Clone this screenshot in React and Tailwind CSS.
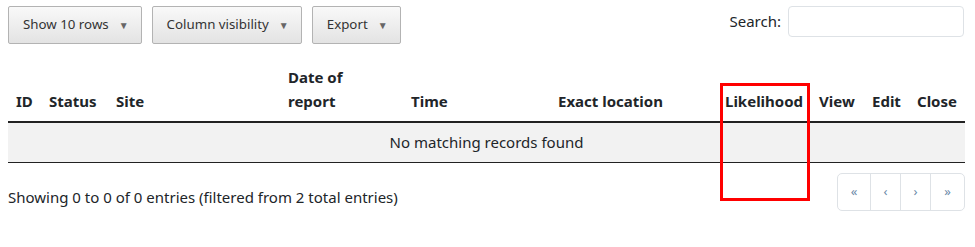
import React from "react";

const columns = [
  { label: "ID", w: "w-[33px]" },
  { label: "Status", w: "w-[67px]" },
  { label: "Site", w: "w-[172px]" },
  { label: "Date of report", w: "w-[123px]", wrap: true },
  { label: "Time", w: "w-[147px]" },
  { label: "Exact location", w: "w-[167px]" },
  { label: "Likelihood", w: "w-[94px]" },
  { label: "View", w: "w-[53px]" },
  { label: "Edit", w: "w-[45px]" },
  { label: "Close", w: "w-[56px]" },
];

const ToolButton = ({ children }) => (
  <button className="h-[38px] pl-[14px] pr-[12px] flex items-center gap-[10px] rounded-[2px] border border-[#b3b3b3] bg-gradient-to-b from-[#f9f9f9] to-[#e3e3e3] text-[#333] text-[13.3px]">
    <span>{children}</span>
    <span className="text-[10px] text-[#666]">▼</span>
  </button>
);

export default function App() {
  return (
    <div className="relative w-[975px] h-[247px] bg-white text-[#212529] text-[15px] font-['Noto_Sans',sans-serif] px-[8px] pt-[6px]">
      <div className="flex items-start justify-between">
        <div className="flex gap-[10px]">
          <ToolButton>Show 10 rows</ToolButton>
          <ToolButton>Column visibility</ToolButton>
          <ToolButton>Export</ToolButton>
        </div>
        <label className="flex items-center gap-[7px] pr-[3px]">
          <span>Search:</span>
          <input className="w-[176px] h-[31px] rounded-[4px] border border-[#dee2e6] outline-none" />
        </label>
      </div>

      <table className="table-fixed w-[957px] mt-[13px] border-collapse">
        <thead>
          <tr className="border-b-2 border-[#222]">
            {columns.map((c) => (
              <th
                key={c.label}
                className={`${c.w} text-left align-bottom font-bold leading-[24px] pl-[8px] pt-[8px] pb-[8px] ${c.wrap ? "" : "whitespace-nowrap"}`}
              >
                {c.wrap ? (
                  <>
                    Date of
                    <br />
                    report
                  </>
                ) : (
                  c.label
                )}
              </th>
            ))}
          </tr>
        </thead>
        <tbody>
          <tr className="bg-[#f2f2f2] border-b border-[#222]">
            <td colSpan={10} className="h-[40px] text-center">
              No matching records found
            </td>
          </tr>
        </tbody>
      </table>

      <div className="flex items-center justify-between mt-[10px]">
        <div className="pt-[12px]">Showing 0 to 0 of 0 entries (filtered from 2 total entries)</div>
        <div className="flex h-[38px] border border-[#dee2e6] rounded-[5px] mr-[2px] text-[#6c8aa8] text-[13px]">
          <span className="w-[33px] flex items-center justify-center border-r border-[#dee2e6]">«</span>
          <span className="w-[30px] flex items-center justify-center border-r border-[#dee2e6]">‹</span>
          <span className="w-[30px] flex items-center justify-center border-r border-[#dee2e6]">›</span>
          <span className="w-[33px] flex items-center justify-center">»</span>
        </div>
      </div>

      <div className="absolute left-[720px] top-[83px] w-[90px] h-[118px] border-[3px] border-[#ff0000]" />
    </div>
  );
}
